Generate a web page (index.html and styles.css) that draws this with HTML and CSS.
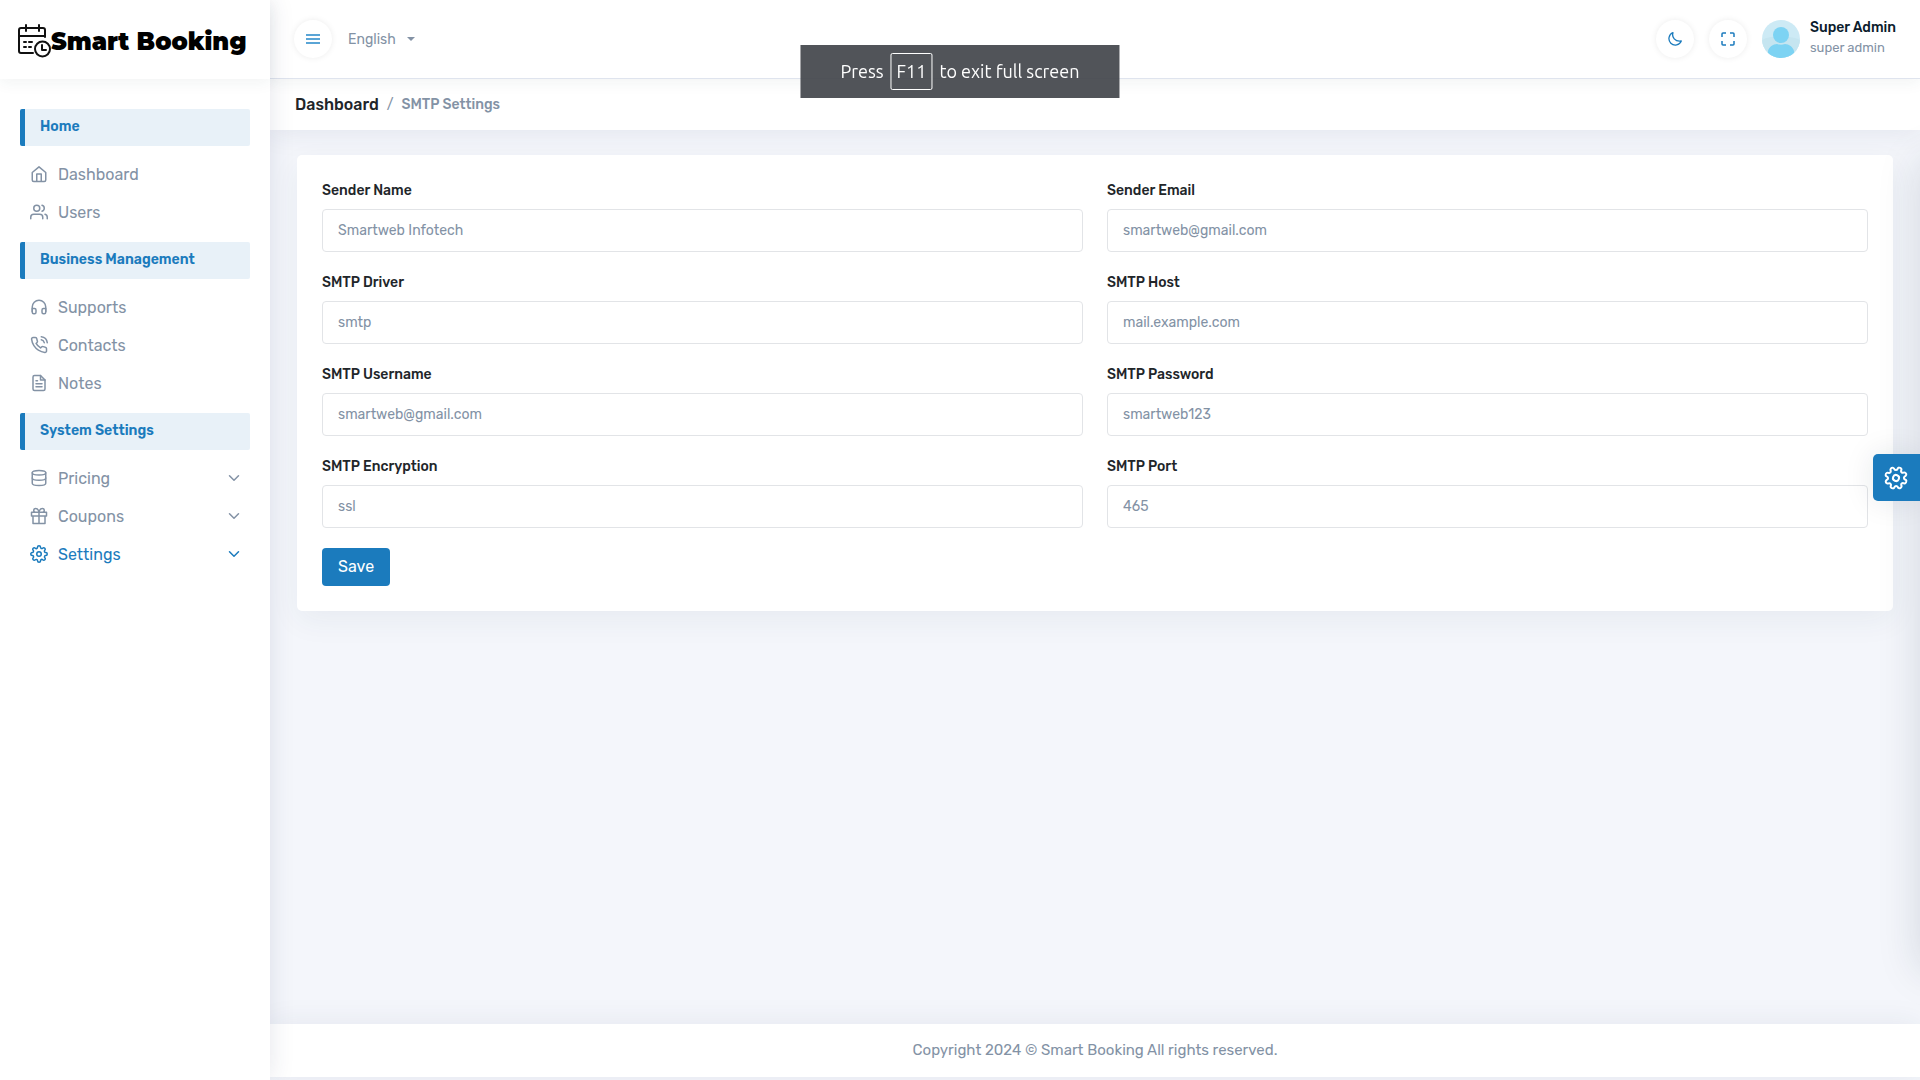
FILE: index.html
```
<!DOCTYPE html>
<html lang="en">

<head>
    <meta charset="UTF-8">
    <meta name="viewport" content="width=device-width, initial-scale=1.0">
    <title>SMTP Settings</title>
    <link rel="stylesheet" href="styles.css">
</head>

<body>
    <div class="layout">
        <aside class="sidebar">
            <a class="logo" href="#">
                <svg width="33" height="34" viewBox="0 0 33 34" fill="none" stroke="#111" stroke-width="2" stroke-linecap="round" stroke-linejoin="round">
                    <path d="M27 13V6a2 2 0 0 0-2-2H3a2 2 0 0 0-2 2v21a2 2 0 0 0 2 2h12M1 12h26M8 1v6M21 1v6M6 18h2M11 18h3M6 23h2M11 23h2" />
                    <circle cx="24.500" cy="25" r="7.500" />
                    <path d="M24 21v5h4" />
                </svg>
                <span>Smart Booking</span>
            </a>
            <nav class="menu">
                <h6>Home</h6>
                <ul>
                    <li><a href="#"><svg class="icon" viewBox="0 0 24 24"><path d="M3 10l9-7.500 9 7.500v10a2 2 0 0 1-2 2H5a2 2 0 0 1-2-2zM9 22V12h6v10" /></svg>Dashboard</a></li>
                    <li><a href="#"><svg class="icon" viewBox="0 0 24 24"><path d="M17 21v-2a4 4 0 0 0-4-4H5a4 4 0 0 0-4 4v2M23 21v-2a4 4 0 0 0-3-3.870M16 3.130a4 4 0 0 1 0 7.750" /><circle cx="9" cy="7" r="4" /></svg>Users</a></li>
                </ul>
                <h6>Business Management</h6>
                <ul>
                    <li><a href="#"><svg class="icon" viewBox="0 0 24 24"><path d="M3 18v-6a9 9 0 0 1 18 0v6" /><path d="M21 19a2 2 0 0 1-2 2h-1a2 2 0 0 1-2-2v-3a2 2 0 0 1 2-2h3zM3 19a2 2 0 0 0 2 2h1a2 2 0 0 0 2-2v-3a2 2 0 0 0-2-2H3z" /></svg>Supports</a></li>
                    <li><a href="#"><svg class="icon" viewBox="0 0 24 24"><path d="M15.050 5A5 5 0 0 1 19 8.950M15.050 1A9 9 0 0 1 23 8.940M22 16.920v3a2 2 0 0 1-2.180 2 19.790 19.790 0 0 1-8.630-3.070 19.500 19.500 0 0 1-6-6 19.790 19.790 0 0 1-3.070-8.670A2 2 0 0 1 4.110 2h3a2 2 0 0 1 2 1.720c.127.960.361 1.903.7 2.810a2 2 0 0 1-.45 2.110L8.090 9.910a16 16 0 0 0 6 6l1.270-1.270a2 2 0 0 1 2.110-.450c.907.339 1.850.573 2.810.700A2 2 0 0 1 22 16.920z" /></svg>Contacts</a></li>
                    <li><a href="#"><svg class="icon" viewBox="0 0 24 24"><path d="M14 2H6a2 2 0 0 0-2 2v16a2 2 0 0 0 2 2h12a2 2 0 0 0 2-2V8z" /><path d="M14 2v6h6M16 13H8M16 17H8M10 9H8" /></svg>Notes</a></li>
                </ul>
                <h6>System Settings</h6>
                <ul>
                    <li><a href="#"><svg class="icon" viewBox="0 0 24 24"><ellipse cx="12" cy="5" rx="9" ry="3" /><path d="M21 12c0 1.660-4 3-9 3s-9-1.340-9-3" /><path d="M3 5v14c0 1.660 4 3 9 3s9-1.340 9-3V5" /></svg>Pricing<svg class="arrow" viewBox="0 0 24 24"><path d="M6 9l6 6 6-6" /></svg></a></li>
                    <li><a href="#"><svg class="icon" viewBox="0 0 24 24"><path d="M20 12v10H4V12M2 7h20v5H2zM12 22V7M12 7H7.500a2.500 2.500 0 0 1 0-5C11 2 12 7 12 7zM12 7h4.500a2.500 2.500 0 0 0 0-5C13 2 12 7 12 7z" /></svg>Coupons<svg class="arrow" viewBox="0 0 24 24"><path d="M6 9l6 6 6-6" /></svg></a></li>
                    <li><a class="active" href="#"><svg class="icon" viewBox="0 0 24 24"><use href="#gear" /></svg>Settings<svg class="arrow" viewBox="0 0 24 24"><path d="M6 9l6 6 6-6" /></svg></a></li>
                </ul>
            </nav>
        </aside>

        <div class="page">
            <header class="topbar">
                <button class="round" aria-label="Toggle menu">
                    <svg width="14" height="12" viewBox="0 0 14 12"><path d="M0 2h14M0 6h14M0 10h14" stroke="#5aa5d6" stroke-width="2" /></svg>
                </button>
                <button class="language">English <i class="caret"></i></button>
                <div class="user-area">
                    <button class="round" aria-label="Dark mode">
                        <svg width="14" height="14" viewBox="0 0 14 14" fill="none" stroke="#1b7bbd" stroke-width="1.300" stroke-linejoin="round"><path d="M5 .700C3.500 5 7 10 13.300 9A6.400 6.400 0 1 1 5 .700z" /></svg>
                    </button>
                    <button class="round" aria-label="Full screen">
                        <svg width="14" height="14" viewBox="0 0 14 14" fill="none" stroke="#1b7bbd" stroke-width="1.500"><path d="M1 5V2a1 1 0 0 1 1-1h3M9 1h3a1 1 0 0 1 1 1v3M13 9v3a1 1 0 0 1-1 1H9M5 13H2a1 1 0 0 1-1-1V9" /></svg>
                    </button>
                    <a class="profile" href="#">
                        <svg width="38" height="38" viewBox="0 0 38 38">
                            <defs><clipPath id="avatar"><circle cx="19" cy="19" r="19" /></clipPath></defs>
                            <g clip-path="url(#avatar)">
                                <path d="M0 0h38v38H0z" fill="#cdeaf5" />
                                <path d="M0 20c8-5 28-5 38 0v18H0z" fill="#c5e5f0" />
                                <circle cx="19" cy="15" r="8" fill="#7dd3f3" />
                                <path d="M6 31c1-4 5-7 9-7 3 1 5 1 8 0 4 0 8 3 9 7v7H6z" fill="#7dd3f3" />
                            </g>
                        </svg>
                        <span>
                            <strong>Super Admin</strong>
                            <small>super admin</small>
                        </span>
                    </a>
                </div>
            </header>

            <div class="breadcrumb">
                <a href="#">Dashboard</a>
                <i>/</i>
                <span>SMTP Settings</span>
            </div>

            <main class="content">
                <form class="card">
                    <div class="fields">
                        <div class="field">
                            <label for="sender-name">Sender Name</label>
                            <input type="text" id="sender-name" value="Smartweb Infotech">
                        </div>
                        <div class="field">
                            <label for="sender-email">Sender Email</label>
                            <input type="text" id="sender-email" value="smartweb@gmail.com">
                        </div>
                        <div class="field">
                            <label for="driver">SMTP Driver</label>
                            <input type="text" id="driver" value="smtp">
                        </div>
                        <div class="field">
                            <label for="host">SMTP Host</label>
                            <input type="text" id="host" value="mail.example.com">
                        </div>
                        <div class="field">
                            <label for="username">SMTP Username</label>
                            <input type="text" id="username" value="smartweb@gmail.com">
                        </div>
                        <div class="field">
                            <label for="password">SMTP Password</label>
                            <input type="text" id="password" value="smartweb123">
                        </div>
                        <div class="field">
                            <label for="encryption">SMTP Encryption</label>
                            <input type="text" id="encryption" value="ssl">
                        </div>
                        <div class="field">
                            <label for="port">SMTP Port</label>
                            <input type="text" id="port" value="465">
                        </div>
                    </div>
                    <button type="button" class="save">Save</button>
                </form>
            </main>

            <footer class="footer">Copyright 2024 © Smart Booking All rights reserved.</footer>
        </div>
    </div>

    <div class="drawer"></div>
    <button class="customizer" aria-label="Theme settings">
        <svg width="24" height="24" viewBox="0 0 24 24"><use href="#gear" transform="rotate(22 12 12)" /></svg>
    </button>
    <div class="fullscreen-tip">Press <kbd>F11</kbd> to exit full screen</div>

    <svg class="sprite" width="0" height="0">
        <symbol id="gear" viewBox="0 0 24 24">
            <circle cx="12" cy="12" r="3" />
            <path d="M19.400 15a1.650 1.650 0 0 0 .33 1.820l.06.06a2 2 0 0 1 0 2.830 2 2 0 0 1-2.830 0l-.06-.06a1.650 1.650 0 0 0-1.820-.33 1.650 1.650 0 0 0-1 1.510V21a2 2 0 0 1-2 2 2 2 0 0 1-2-2v-.09A1.650 1.650 0 0 0 9 19.400a1.650 1.650 0 0 0-1.820.33l-.06.06a2 2 0 0 1-2.830 0 2 2 0 0 1 0-2.830l.06-.06a1.650 1.650 0 0 0 .33-1.820 1.650 1.650 0 0 0-1.510-1H3a2 2 0 0 1-2-2 2 2 0 0 1 2-2h.09A1.650 1.650 0 0 0 4.600 9a1.650 1.650 0 0 0-.33-1.820l-.06-.06a2 2 0 0 1 0-2.830 2 2 0 0 1 2.830 0l.06.06a1.650 1.650 0 0 0 1.820.33H9a1.650 1.650 0 0 0 1-1.510V3a2 2 0 0 1 2-2 2 2 0 0 1 2 2v.09a1.650 1.650 0 0 0 1 1.510 1.650 1.650 0 0 0 1.820-.33l.06-.06a2 2 0 0 1 2.830 0 2 2 0 0 1 0 2.830l-.06.06a1.650 1.650 0 0 0-.33 1.820V9a1.650 1.650 0 0 0 1.510 1H21a2 2 0 0 1 2 2 2 2 0 0 1-2 2h-.09a1.650 1.650 0 0 0-1.510 1z" />
        </symbol>
    </svg>
</body>

</html>
```
FILE: styles.css
```
* {
    box-sizing: border-box;
    margin: 0;
    padding: 0;
}

body {
    font-family: Rubik, Roboto, sans-serif;
    font-size: 14px;
    line-height: 21px;
    color: #8392a5;
    background: #f4f6fb;
    overflow: hidden;
}

a {
    color: inherit;
    text-decoration: none;
}

button,
input {
    font: inherit;
    color: inherit;
    border: none;
    background: none;
}

ul {
    list-style: none;
}

.layout {
    display: flex;
    min-height: 100vh;
}

/* sidebar */
.sidebar {
    flex: 0 0 270px;
    background: #fff;
    box-shadow: 0 0 24px rgba(40, 50, 90, .12);
    z-index: 2;
}

.logo {
    display: flex;
    align-items: center;
    height: 79px;
    padding: 3px 0 0 18px;
    box-shadow: 0 4px 14px rgba(40, 60, 60, .06);
}

.logo span {
    font-family: Montserrat, Inter, sans-serif;
    font-size: 24px;
    font-weight: 900;
    color: #000;
    white-space: nowrap;
}

.menu {
    padding: 30px 20px;
}

.menu h6 {
    height: 37px;
    padding: 7px 15px;
    border-left: 5px solid #1b7bbd;
    border-radius: 2px;
    background: #e8f1f8;
    color: #1b7bbd;
    font-size: 14px;
    font-weight: 600;
}

.menu ul {
    padding: 9px 0 11px;
}

.menu li a {
    display: flex;
    align-items: center;
    height: 38px;
    padding: 0 10px;
    font-size: 16px;
}

.menu li a.active {
    color: #1b7bbd;
}

.icon,
.arrow,
.customizer svg {
    fill: none;
    stroke: currentColor;
    stroke-width: 2;
    stroke-linecap: round;
    stroke-linejoin: round;
}

.icon {
    width: 18px;
    height: 18px;
    margin-right: 10px;
}

.arrow {
    width: 18px;
    height: 18px;
    margin-left: auto;
    margin-right: -3px;
}

/* top bar */
.page {
    flex: 1;
    min-width: 0;
    display: flex;
    flex-direction: column;
}

.topbar {
    display: flex;
    align-items: center;
    height: 79px;
    padding: 0 24px;
    background: #fff;
    border-bottom: 1px solid #dfe4ee;
    box-shadow: 0 4px 14px rgba(40, 60, 60, .06);
    z-index: 1;
}

.round {
    display: flex;
    align-items: center;
    justify-content: center;
    width: 38px;
    height: 38px;
    border-radius: 50%;
    background: #fff;
    box-shadow: 0 0 6px rgba(0, 0, 0, .08);
}

.language {
    display: flex;
    align-items: center;
    gap: 11px;
    margin-left: 16px;
}

.caret {
    border: 4px solid transparent;
    border-top-color: currentColor;
    border-bottom: none;
}

.user-area {
    display: flex;
    gap: 15px;
    margin-left: auto;
}

.profile {
    display: flex;
    gap: 10px;
}

.profile strong,
.profile small {
    display: block;
    font-size: 14px;
    line-height: 18px;
}

.profile span {
    margin-top: -1px;
}

.profile strong {
    color: #0b1c2c;
    font-weight: 500;
}

.profile small {
    padding-top: 2px;
    font-size: 13px;
}

.breadcrumb {
    display: flex;
    align-items: center;
    gap: 8px;
    height: 51px;
    padding: 0 25px;
    background: #fff;
    box-shadow: 0 0 30px rgba(40, 50, 90, .1);
    font-weight: 500;
}

.breadcrumb a {
    color: #212529;
    font-size: 16px;
}

.breadcrumb i {
    font-style: normal;
    font-weight: 400;
}

/* form */
.content {
    flex: 1;
    padding: 25px 27px;
}

.card {
    padding: 25px;
    background: #fff;
    border-radius: 5px;
    box-shadow: 0 10px 30px rgba(40, 60, 90, .06);
}

.fields {
    display: grid;
    grid-template-columns: 1fr 1fr;
    column-gap: 24px;
}

.field {
    margin-bottom: 20px;
}

.field label {
    display: block;
    width: fit-content;
    margin-bottom: 8px;
    color: #212529;
    font-weight: 500;
}

.field input {
    display: block;
    width: 100%;
    height: 43px;
    padding: 0 15px;
    border: 1px solid #e2e4e7;
    border-radius: 4px;
}

.save {
    display: block;
    height: 38px;
    padding: 0 16px 2px;
    border-radius: 4px;
    background: #1b7bbd;
    color: #fff;
    font-size: 16px;
}

.footer {
    height: 53px;
    margin-bottom: 3px;
    padding-top: 16px;
    background: #fff;
    box-shadow: 0 0 30px rgba(40, 50, 90, .08);
    font-size: 15px;
    text-align: center;
}

/* closed theme drawer, only its shadow reaches the page */
.drawer {
    position: fixed;
    top: 160px;
    right: -300px;
    bottom: 110px;
    width: 300px;
    box-shadow: 0 0 40px rgba(20, 40, 60, .15);
    z-index: 3;
}

.customizer {
    position: fixed;
    top: 454px;
    right: 0;
    width: 47px;
    height: 47px;
    padding: 11px;
    border-radius: 5px 0 0 5px;
    background: #1b7bbd;
    box-shadow: 0 0 30px rgba(20, 40, 60, .1);
    color: #fff;
    z-index: 4;
}

.customizer svg {
    display: block;
}

.fullscreen-tip {
    position: fixed;
    top: 45px;
    left: 50%;
    transform: translateX(-50%);
    display: flex;
    align-items: center;
    gap: 7px;
    height: 53px;
    padding: 0 40px;
    background: rgba(68, 71, 76, .93);
    color: #fff;
    font-family: Ubuntu, "Noto Sans", sans-serif;
    font-size: 18px;
    white-space: nowrap;
    z-index: 5;
}

.fullscreen-tip kbd {
    padding: 7px 5px;
    border: 1px solid #fff;
    border-radius: 2px;
    font: inherit;
}

.sprite {
    position: absolute;
}
```
